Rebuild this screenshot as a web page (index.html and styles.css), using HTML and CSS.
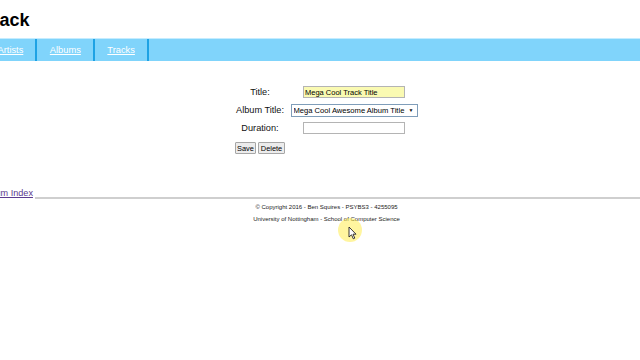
FILE: index.html
```html
<!DOCTYPE html>
<html lang="en">

<head>
    <meta charset="UTF-8" />
    <title>Track</title>
    <link rel="stylesheet" href="styles.css">
</head>

<body>

    <div class="page">
        <h1>Track</h1>

        <!-- Menu principal -->
        <ul class="nav">
            <li><a href="#">Artists</a></li>
            <li><a href="#">Albums</a></li>
            <li><a href="#">Tracks</a></li>
        </ul>

        <!-- Formulario da faixa -->
        <form class="track-form">
            <div class="fields">
                <label>Title:</label>
                <input type="text" class="field field-title" value="Mega Cool Track Title">

                <label>Album Title:</label>
                <span class="select-wrap">
                    <select class="field-select">
                        <option>Mega Cool Awesome Album Title</option>
                    </select>
                    <span class="select-arrow">&#9660;</span>
                </span>

                <label>Duration:</label>
                <input type="text" class="field" value="">
            </div>

            <div class="actions">
                <button type="button" class="btn btn-save">Save</button>
                <button type="button" class="btn btn-delete">Delete</button>
            </div>
        </form>

        <div class="index-row">
            <a href="#" class="index-link">Album Index</a>
            <span class="rule"></span>
        </div>

        <div class="footer">
            <p>&copy; Copyright 2016 - Ben Squires - PSYBS3 - 4255095</p>
            <p>University of Nottingham - School of Computer Science</p>
        </div>
    </div>

    <!-- destaque do cursor da gravacao -->
    <div class="cursor-spot"></div>
    <svg class="cursor" width="9" height="14" viewBox="0 0 9 14">
        <path d="M1 1 L1 11 L3.5 8.8 L5.3 12.8 L6.8 12.1 L5 8.2 L8 8.2 Z" fill="#fff" stroke="#222" stroke-width="0.9" stroke-linejoin="round" />
    </svg>

</body>

</html>
```

FILE: styles.css
```css
body {
    margin: 0;
    overflow: hidden;
    font-family: "Liberation Sans", Arial, sans-serif;
    background: #fff;
    color: #000;
}

.page {
    margin-left: -22px;
    width: 697px;
}

h1 {
    font-size: 18px;
    line-height: 22px;
    margin: 9px 0 8px;
    padding-left: 4.4px;
    font-weight: bold;
}

/* Menu */
.nav {
    list-style: none;
    margin: -1px 0 0;
    padding: 0 0 0 7px;
    display: flex;
    height: 22px;
    background: #80d4fb;
    border-top: 1px solid #c4ecff;
}

.nav li {
    border-right: 2px solid #1ea2e4;
}

.nav a {
    display: block;
    padding: 0 12px 0 12.5px;
    line-height: 22px;
    font-size: 9.3px;
    color: #fff;
}

/* Formulario */
.track-form {
    width: 186px;
    margin: 22px auto 0;
}

.fields {
    display: grid;
    grid-template-columns: 53px 131px;
    column-gap: 2px;
    grid-auto-rows: 18px;
    align-items: center;
    justify-items: center;
}

.fields label {
    font-size: 9.2px;
    color: #111;
}

.field {
    box-sizing: border-box;
    width: 102px;
    height: 12px;
    margin: 0;
    padding: 0 1px;
    border: 1px solid #b4b4b4;
    font-family: "Liberation Sans", Arial, sans-serif;
    font-size: 7.5px;
    color: #000;
    background: #fff;
}

.field-title {
    background: #fafab2;
}

.select-wrap {
    position: relative;
    display: flex;
}

.field-select {
    appearance: none;
    box-sizing: border-box;
    width: 127px;
    height: 13px;
    margin: 0;
    padding: 0 0 0 2px;
    border: 1px solid #7f9db9;
    border-radius: 0;
    background: #fff;
    font-family: "Liberation Sans", Arial, sans-serif;
    font-size: 7.6px;
    line-height: 11px;
    color: #000;
}

.select-arrow {
    position: absolute;
    right: 4px;
    top: 3px;
    font-size: 5px;
    line-height: 7px;
    color: #111;
    pointer-events: none;
}

.actions {
    display: flex;
    gap: 2px;
    margin-top: 5px;
    padding-left: 1.5px;
}

.btn {
    box-sizing: border-box;
    height: 12px;
    padding: 0;
    border: 1px solid #a6a6a6;
    border-radius: 1px;
    background: #ececec;
    font-family: "Liberation Sans", Arial, sans-serif;
    font-size: 7.4px;
    color: #000;
}

.btn-save {
    width: 21px;
}

.btn-delete {
    width: 27px;
}

/* Link e rodape */
.index-row {
    display: flex;
    align-items: flex-end;
    margin-top: 33px;
    padding-left: 4.4px;
}

.index-link {
    font-size: 9.1px;
    line-height: 12px;
    color: #5b3a8e;
}

.rule {
    flex: 1;
    margin-left: 2px;
    border-bottom: 2px solid #cfcfcf;
}

.footer {
    text-align: center;
    padding-top: 2px;
    font-size: 6px;
    line-height: 12px;
    color: #222;
}

.footer p {
    margin: 0;
}

/* Cursor da gravacao */
.cursor-spot {
    position: absolute;
    left: 338px;
    top: 218px;
    width: 24px;
    height: 24px;
    border-radius: 50%;
    background: rgba(255, 236, 80, 0.55);
}

.cursor {
    position: absolute;
    left: 348px;
    top: 226px;
}
```
